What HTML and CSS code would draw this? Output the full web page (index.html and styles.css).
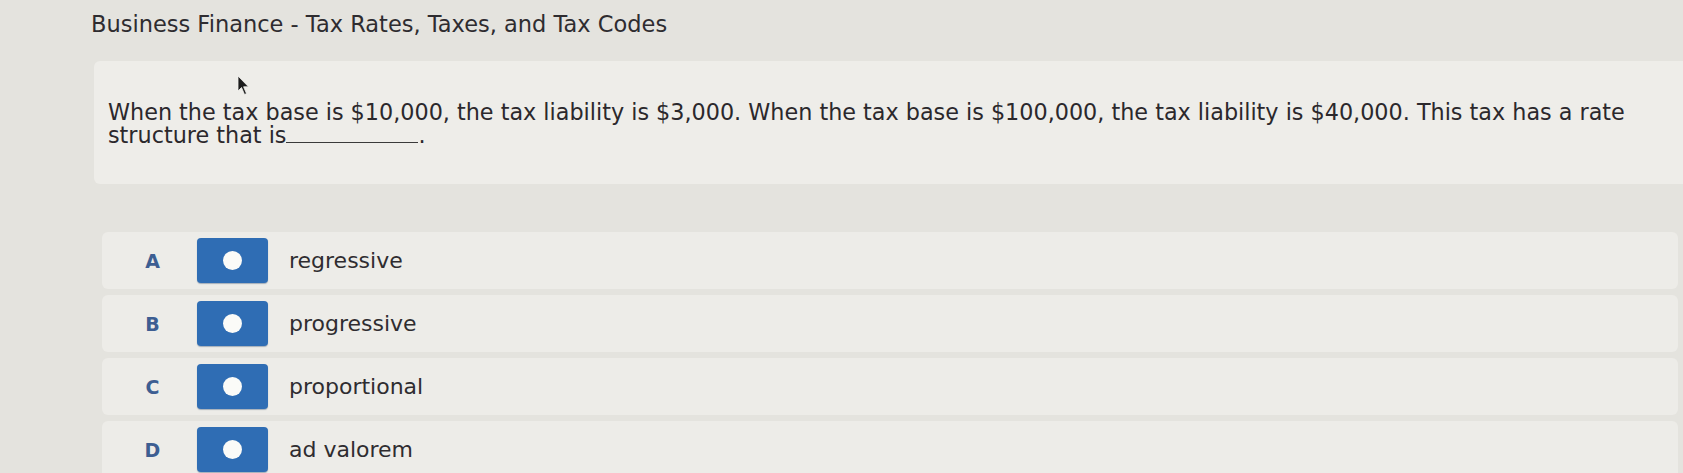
FILE: index.html
```html
<!DOCTYPE html>
<html lang="en">
<head>
<meta charset="utf-8">
<title>Business Finance - Tax Rates, Taxes, and Tax Codes</title>
<link rel="stylesheet" href="styles.css">
</head>
<body>
<div class="page">
  <h1 class="title">Business Finance - Tax Rates, Taxes, and Tax Codes</h1>
  <div class="question">
    <p class="qtext">When the tax base is $10,000, the tax liability is $3,000. When the tax base is $100,000, the tax liability is $40,000. This tax has a rate structure that is<span class="blank"></span>.</p>
  </div>
  <ul class="options">
    <li class="option"><span class="letter">A</span><span class="radio"><span class="dot"></span></span><span class="label">regressive</span></li>
    <li class="option"><span class="letter">B</span><span class="radio"><span class="dot"></span></span><span class="label">progressive</span></li>
    <li class="option"><span class="letter">C</span><span class="radio"><span class="dot"></span></span><span class="label">proportional</span></li>
    <li class="option"><span class="letter">D</span><span class="radio"><span class="dot"></span></span><span class="label">ad valorem</span></li>
  </ul>
  <svg class="cursor" width="14" height="22" viewBox="0 0 14 22" aria-hidden="true">
    <path d="M1 1 L1 16 L4.5 12.5 L7.5 19.5 L9.5 18.6 L6.6 11.8 L11.5 11.8 Z" fill="#1c1c1c" stroke="#f4f4f0" stroke-width="0.8"/>
  </svg>
</div>
</body>
</html>
```
FILE: styles.css
```css
html, body {
  margin: 0;
  padding: 0;
}
body {
  background: #e4e3de;
  font-family: "DejaVu Sans", Verdana, sans-serif;
  color: #2b282c;
  overflow: hidden;
}
.page {
  position: relative;
  padding: 12px 0 0 94px;
  height: 473px;
  box-sizing: border-box;
}
.title {
  margin: 0 0 0 -3px;
  font-size: 22.5px;
  font-weight: normal;
  line-height: 24px;
  color: #2e2c30;
}
.question {
  margin-top: 25px;
  background: #eeede9;
  border-radius: 6px 0 0 6px;
  padding: 40px 20px 37px 14px;
}
.qtext {
  margin: 0;
  font-size: 22.3px;
  line-height: 23px;
}
.blank {
  display: inline-block;
  width: 132px;
  height: 0;
  border-bottom: 1px solid #3a3a3a;
  vertical-align: baseline;
}
.options {
  list-style: none;
  margin: 48px 5px 0 8px;
  padding: 0;
  display: flex;
  flex-direction: column;
  gap: 6px;
}
.option {
  display: flex;
  align-items: center;
  height: 57px;
  background: #edece8;
  border-radius: 6px;
}
.letter {
  width: 95px;
  padding-left: 6px;
  box-sizing: border-box;
  text-align: center;
  font-weight: bold;
  font-size: 19px;
  color: #3d5e92;
}
.radio {
  width: 71px;
  height: 45px;
  background: #2f6db4;
  border-radius: 4px;
  display: flex;
  align-items: center;
  justify-content: center;
  box-shadow: 0 1px 1px rgba(30, 60, 100, 0.35);
}
.dot {
  width: 19px;
  height: 19px;
  border-radius: 50%;
  background: #fbfbf8;
}
.label {
  margin-left: 21px;
  font-size: 22px;
  color: #2f2c30;
}
.cursor {
  position: absolute;
  left: 237px;
  top: 75px;
}
```
